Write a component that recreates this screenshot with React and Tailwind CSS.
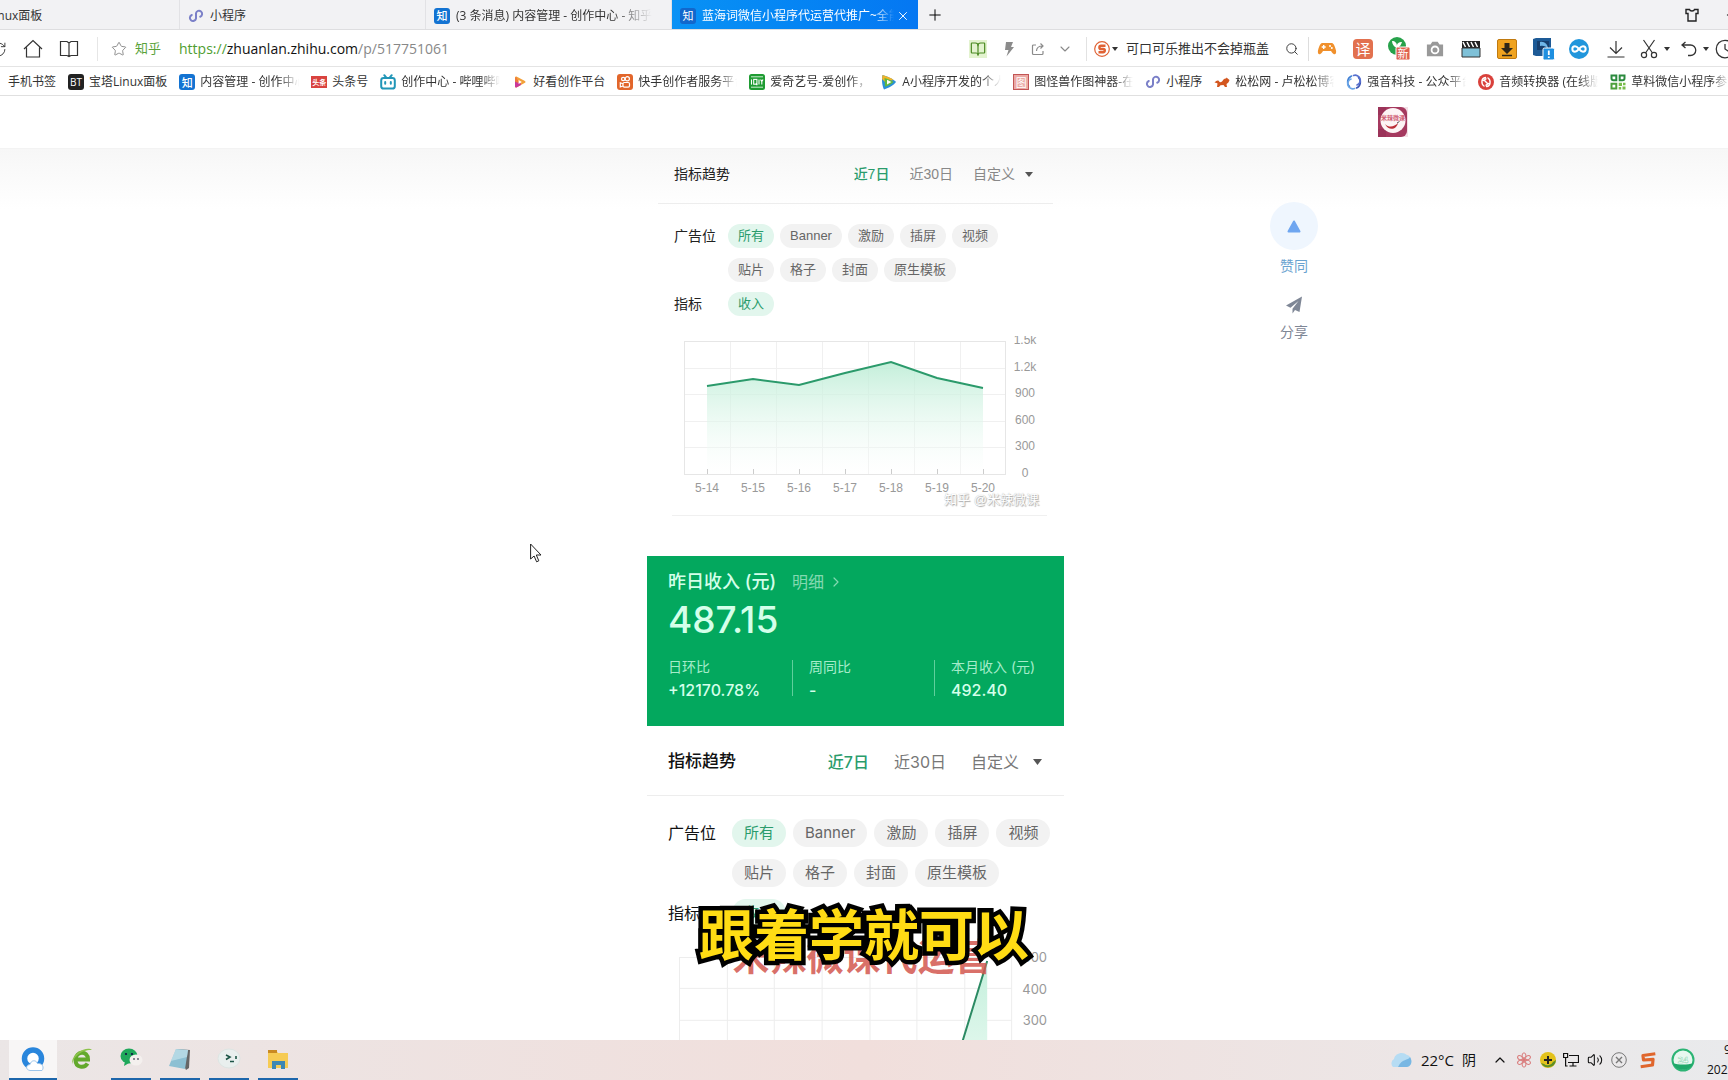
import React from "react";
import {
  BookOpen, Star, ChevronDown, ChevronUp, ChevronRight, Search, Plus, X, Minus,
  Infinity as InfinityIcon, RotateCw, Volume2,
} from "lucide-react";

const UI = "font-['Open_Sans','Noto_Sans_CJK_SC',sans-serif]";
const ARIAL = "font-['Liberation_Sans','Noto_Sans_CJK_SC',sans-serif]";
const INTER = "font-['Inter','Noto_Sans_CJK_SC',sans-serif]";
const FADE = "[mask-image:linear-gradient(to_right,black_80%,transparent)]";

/* ---------- site icons ---------- */

const Mini = ({ color = "#7b80c8" }) => (
  <svg viewBox="0 0 16 16" className="size-4 shrink-0" fill="none" stroke={color} strokeWidth="2" strokeLinecap="round">
    <path d="M3.800 7A3.100 3.100 0 1 0 8 10.500V5.200a3.100 3.100 0 1 1 4.200 3.500" />
  </svg>
);
const Tile = ({ children, className }) => (
  <span className={"flex size-4 shrink-0 items-center justify-center rounded-[3px] leading-none text-white " + className}>{children}</span>
);
const Zhihu = () => <Tile className="bg-[#1373d2] text-[11px] font-medium">知</Tile>;
const Bili = () => (
  <svg viewBox="0 0 16 16" className="size-4 shrink-0" fill="none" stroke="#2196b8" strokeWidth="2" strokeLinecap="round">
    <rect x="1.2" y="4" width="13.6" height="10.6" rx="2.4" />
    <path d="M4.3 1.2l2 2.4M11.7 1.2l-2 2.4M5.2 8v1.8M10.8 8v1.8" />
  </svg>
);
const Haokan = () => (
  <svg viewBox="0 0 16 16" className="size-4 shrink-0" strokeLinejoin="round" strokeWidth="2">
    <path d="M4 3.500v9l8.500-4.600z" fill="#f3a13a" stroke="#f3a13a" />
    <path d="M4 7v5.500l4-2.200z" fill="#c9389b" stroke="#c9389b" />
    <path d="M4 3.500V7l3 1" fill="#ef6a3c" stroke="#ef7c3c" />
    <path d="M6.600 6v4l3.300-2z" fill="#fff" />
  </svg>
);
const Kuaishou = () => (
  <svg viewBox="0 0 16 16" className="size-4 shrink-0">
    <rect width="16" height="16" rx="3" fill="#e2662b" />
    <g fill="none" stroke="#fff" strokeWidth="1.2">
      <circle cx="6.2" cy="5" r="1.7" /><circle cx="10.3" cy="4.8" r="2.1" />
      <rect x="6" y="8.500" width="6.5" height="4.6" rx="1.3" /><path d="M6 9.800L3.300 8.800v4.200L6 12" />
    </g>
  </svg>
);
const Iqiyi = () => (
  <svg viewBox="0 0 16 16" className="size-4 shrink-0">
    <rect width="16" height="16" rx="2.5" fill="#1f9c33" />
    <path d="M2 2.800h12M2 13.200h12" stroke="#cdeed2" />
    <g fill="none" stroke="#fff" strokeWidth="1.1"><path d="M2.500 5.400v5.200" /><rect x="4.700" y="5.400" width="3.200" height="4.800" /><path d="M7 9.400l1.200 1.800M10 5.400v5.200M11.600 5.400l1.200 2.200 1.200-2.200M12.800 7.600v3" /></g>
  </svg>
);
const Tencent = () => (
  <svg viewBox="0 0 16 16" className="size-4 shrink-0">
    <path d="M1.500 1C8 3 13 5.500 15 8c-2 3-7 6-12 7.500C1 12 .500 5 1.500 1z" fill="#2a90d8" />
    <path d="M1.500 1C8 3 11 4.500 12.500 6L4 8 1 5z" fill="#f0b429" />
    <path d="M3.500 4C8 5.500 11 6.800 12.500 8c-2 2-5 3.500-8.500 4.800z" fill="#5fb83f" />
    <path d="M6 5.800L10.400 8 6 10.400z" fill="#fff" />
  </svg>
);
const Squirrel = () => (
  <svg viewBox="0 0 16 16" className="size-4 shrink-0">
    <path d="M.5 9c2-3 4-3 5-1 1.500.5 3-.5 4-2.500C11 4 12.500 5 12.500 3.500L15.500 6c-.5 2-1.500 3-3 4l.5 3h-2l-1.500-2-3 .2L5 13H3l.5-3.500C2.500 8.500 1.500 8.500.5 9z" fill="#d3561f" />
  </svg>
);
const Qiangyin = () => (
  <svg viewBox="0 0 16 16" className="size-4 shrink-0" fill="none" strokeWidth="1.6" strokeLinecap="round">
    <path d="M5.500 2A6.500 6.500 0 0 0 3.500 12.500" stroke="#3f7fd4" /><path d="M5 5A5 5 0 0 0 8.500 14.500" stroke="#6aa5e6" />
    <path d="M10.500 14A6.500 6.500 0 0 0 12.500 3.500" stroke="#3c55b5" /><path d="M11 11A5 5 0 0 0 7.500 1.500" stroke="#5870cf" />
  </svg>
);
const AudioConv = () => (
  <svg viewBox="0 0 16 16" className="size-4 shrink-0">
    <circle cx="8" cy="8" r="8" fill="#d9413b" />
    <g fill="none" stroke="#fff" strokeWidth="1.400" strokeLinecap="round"><path d="M7.500 3.500C3 4 3 10 6 12M8.500 12.500C13 12 13 6 10 4M5.500 6.500L8 4.800M10.500 9.500L8 11.200" /><path d="M6.500 6.500l3 3" /></g>
  </svg>
);
const Caoliao = () => (
  <svg viewBox="0 0 16 16" className="size-4 shrink-0" fill="none" strokeWidth="2">
    <path d="M1.500 1.500h4.800v4.800H3.500a2 2 0 0 1-2-2zM9.700 1.500h4.800v2.800a2 2 0 0 1-2 2H9.700z" stroke="#2b8a3e" />
    <path d="M1.500 9.700h4.800v4.800H1.500z" stroke="#4da03c" /><path d="M8.700 8.700H12V12H8.700zM12.500 12.500h3v3h-3zM13 8.700h2.500v2.500H13zM8.700 13h2.500v2.500H8.700z" fill="#79bd4c" stroke="none" />
  </svg>
);

/* ---------- browser chrome ---------- */

const Caret = ({ className = "h-1 w-1.5 text-[#333]" }) => (
  <svg viewBox="0 0 6 4" preserveAspectRatio="none" className={"shrink-0 " + className}><path d="M0 0h6L3 4z" fill="currentColor" /></svg>
);

function Tab({ icon, title, fade }) {
  return (
    <button type="button" className="flex w-[246px] shrink-0 items-center gap-1.5 border-r border-[#e2e2e5] px-2 pt-0.5 text-[#333]">
      {icon}
      <span className={"max-w-[200px] overflow-hidden whitespace-nowrap " + (fade ? FADE : "")}>{title}</span>
    </button>
  );
}

function TabBar() {
  return (
    <div className="flex h-[30px] shrink-0 overflow-hidden border-b border-[#dedee0] bg-[#f2f2f4] text-xs">
      <nav aria-label="标签页" className="-ml-[66px] flex">
        <Tab icon={<Tile className="bg-[#222] text-[9px]">BT</Tile>} title="宝塔Linux面板" />
        <Tab icon={<Mini />} title="小程序" />
        <Tab icon={<Zhihu />} title="(3 条消息) 内容管理 - 创作中心 - 知乎" fade />
        <div className="flex w-[246px] shrink-0 items-center gap-1.5 bg-gradient-to-r from-[#0a92f5] to-[#0577f2] px-2 pt-0.5 text-white">
          <Tile className="bg-[#1267cc] text-[11px]">知</Tile>
          <button type="button" className="w-[194px] overflow-hidden text-left whitespace-nowrap [mask-image:linear-gradient(to_right,black_90%,transparent)]">蓝海词微信小程序代运营代推广~全能</button>
          <button type="button" aria-label="关闭标签页" className="-ml-1"><X className="size-3.5" strokeWidth={1.6} /></button>
        </div>
      </nav>
      <button type="button" aria-label="新标签页" className="ml-2 flex items-center"><Plus className="size-[18px]" strokeWidth={1.3} /></button>
      <div className="-mr-3 ml-auto flex items-center gap-[25px]">
        <button type="button" aria-label="皮肤">
          <svg viewBox="0 0 14 14" className="size-3.5" fill="none" stroke="#222" strokeWidth="1.400"><path d="M1 1.500h3.500c.5 2 4.500 2 5 0H13v4h-2v7.500H3V5.500H1z" /></svg>
        </button>
        <button type="button" aria-label="最小化"><Minus className="size-4" strokeWidth={1.5} /></button>
      </div>
    </div>
  );
}

const plugins = [
  ["游戏", <svg viewBox="0 0 20 20" className="size-5"><path d="M5.500 4h9c2 0 3 2 4.500 7.500.8 4-1.800 5-4 2l-1-1.500H6l-1 1.500c-2.200 3-4.800 2-4-2C2.500 6 3.500 4 5.500 4z" fill="#f0902c" /><g fill="#fff"><path d="M6 6h1.400v1.300h1.300v1.400H7.400V10H6V8.700H4.700V7.300H6z" /><circle cx="13" cy="7" r="1" /><circle cx="14.800" cy="9" r="1" /></g></svg>],
  ["翻译", <span className="flex size-5 items-center justify-center rounded-sm bg-[#e2714f] text-[15px] leading-none text-white">译</span>],
  ["微信插件", <svg viewBox="0 0 24 24" className="size-6"><circle cx="10" cy="9" r="9" fill="#27a24b" /><path d="M5 4c3 0 5 2 5 5 0-3 2-4 5-4-1 3-2 5-5 6-3-1-5-4-5-7z" fill="#fff" /><rect x="9" y="10" width="14" height="13" rx="1.500" fill="#e0614f" stroke="#fff" /><text x="16" y="20.500" textAnchor="middle" fontSize="11" fill="#fff" fontFamily="Noto Sans CJK SC">新</text></svg>],
  ["截图", <svg viewBox="0 0 20 20" className="size-[18px]"><path d="M1 5h4l2-3h6l2 3h4v13H1z" fill="#999" /><circle cx="10" cy="11" r="3.800" fill="none" stroke="#fff" strokeWidth="2" /></svg>],
  ["视频", <svg viewBox="0 0 20 20" className="size-5"><path d="M1 2h18v7H1z" fill="#222" /><path d="M2 3l2.500 5M6 3l2.500 5M10 3l2.500 5M14 3l2.500 5" stroke="#fff" strokeWidth="1.500" /><path d="M1 9h18v9H1z" fill="#7fc1d8" stroke="#333" /></svg>],
  ["下载器", <svg viewBox="0 0 20 20" className="size-5"><rect x=".5" y=".5" width="19" height="19" rx="1.500" fill="#f0a31f" stroke="#c07a10" /><path d="M7.500 4h5v5H16l-6 6-6-6h3.500z" fill="#2e2718" /><path d="M5 16.500h10" stroke="#2e2718" strokeWidth="1.500" /></svg>],
  ["书签本", <svg viewBox="0 0 24 24" className="size-6"><path d="M2 2l3-1h15v18H5l-3-1z" fill="#1d5a96" /><path d="M6 4h12v9H6z" fill="#173f6e" /><path d="M9 5c4-1 8 2 8 7-2-3-5-4-8-3z" fill="#6fb6e8" /><rect x="12" y="11" width="11.500" height="12" rx="1.500" fill="#1e8fe0" stroke="#fff" /><path d="M17.800 13.500v4.500M17.800 19.500v1.500" stroke="#fff" strokeWidth="1.800" /></svg>],
  ["云服务", <span className="flex size-5 items-center justify-center rounded-full bg-[#2196dc] text-white"><InfinityIcon className="size-4" strokeWidth={3} /></span>],
];

function Toolbar() {
  return (
    <div className="flex h-[37px] shrink-0 items-center overflow-hidden border-b border-[#e4e4e4] bg-white pt-0.5 text-[#333]">
      <button type="button" aria-label="刷新" className="-ml-2.5 mr-4"><RotateCw className="size-[17px]" strokeWidth={1.3} /></button>
      <button type="button" aria-label="主页" className="mr-4">
        <svg viewBox="0 0 20 20" className="size-5" fill="none" stroke="currentColor" strokeWidth="1.200"><path d="M1 10L10 1.500 19 10M3.500 8.500V18h13V8.500" /></svg>
      </button>
      <button type="button" aria-label="书签" className="mr-[18px]">
        <svg viewBox="0 0 20 20" className="size-5" fill="none" stroke="currentColor" strokeWidth="1.200"><path d="M10 4L8 2.500H1.500v14H8l2 1 2-1h6.500v-14H12zM10 4v13" /></svg>
      </button>
      <div className="flex h-6 flex-1 items-center border-l border-[#e6e6e6] pl-[13px]">
        <Star className="size-4 text-[#888]" strokeWidth={1.4} />
        <span className="ml-2 text-[13px] text-[#5aa33a]">知乎</span>
        <a href="https://zhuanlan.zhihu.com/p/517751061" className="ml-[18px] text-sm whitespace-nowrap text-[#888]">
          <span className="text-[#4f9e30]">https://</span><span className="text-[#111]">zhuanlan.zhihu.com</span>/p/517751061
        </a>
      </div>
      <div className="flex w-[766px] shrink-0 items-center">
        <button type="button" aria-label="阅读模式" className="flex w-8 shrink-0 justify-center"><span className="flex size-[18px] items-center justify-center bg-[#e3f3cf] text-[#4b8a22]"><BookOpen className="size-4" strokeWidth={1.8} /></span></button>
        <button type="button" aria-label="加速" className="flex w-[30px] shrink-0 justify-center text-[#8b8b8b]"><svg viewBox="0 0 14 16" className="h-4 w-3.5"><path d="M4 1h7L9 6h3L4.500 15.500 6.500 9H3z" fill="currentColor" /></svg></button>
        <button type="button" aria-label="分享网页" className="flex w-7 shrink-0 justify-center text-[#8b8b8b]"><svg viewBox="0 0 14 14" className="size-3.5" fill="none" stroke="currentColor" strokeWidth="1.200"><path d="M5 3H2.500A1 1 0 0 0 1.500 4v7.500a1 1 0 0 0 1 1h8.500a1 1 0 0 0 1-1V9M5.500 9c0-3.500 2-5 6.500-5M9.500 1.500L12 4 9.500 6.500" /></svg></button>
        <button type="button" aria-label="更多" className="flex w-[26px] shrink-0 justify-center text-[#888]"><ChevronDown className="size-4" strokeWidth={1.6} /></button>
        <form className="ml-2 flex h-6 w-[222px] shrink-0 items-center border-l border-[#e2e2e2] pl-[7px]" onSubmit={(e) => e.preventDefault()}>
          <button type="button" aria-label="搜索引擎" className="flex items-center gap-0.5">
            <svg viewBox="0 0 16 16" className="size-4"><circle cx="8" cy="8" r="7.300" fill="#fff" stroke="#e06234" strokeWidth="1.200" /><path d="M11.500 4.800H7A1.600 1.600 0 0 0 7 8h2.200a1.600 1.600 0 0 1 0 3.200H4.500" fill="none" stroke="#e06234" strokeWidth="2.400" /></svg>
            <Caret />
          </button>
          <input aria-label="搜索" defaultValue="可口可乐推出不会掉瓶盖" className="ml-2 w-[150px] bg-transparent text-[13px] text-[#333] outline-none" />
          <button type="submit" aria-label="搜索按钮" className="flex w-8 justify-center"><Search className="size-3.5" strokeWidth={1.6} /></button>
        </form>
        <div className="flex h-6 shrink-0 items-center border-l border-[#ddd]">
          {plugins.map(([name, icon]) => (
            <button key={name} type="button" aria-label={name} className="flex w-9 justify-center">{icon}</button>
          ))}
        </div>
        <button type="button" aria-label="下载" className="flex w-[38px] shrink-0 justify-center"><svg viewBox="0 0 18 18" className="size-[18px]" fill="none" stroke="currentColor" strokeWidth="1.200"><path d="M9 1v12M3 7.500L9 13.500l6-6M.5 17h17" /></svg></button>
        <button type="button" aria-label="裁剪" className="flex w-10 shrink-0 items-center justify-center gap-1.5">
          <svg viewBox="0 0 18 20" className="h-5 w-[18px] shrink-0" fill="none" stroke="currentColor" strokeWidth="1.200"><path d="M3.500 1L12.500 14M14.500 1L5.500 14" /><circle cx="4" cy="16" r="2.600" /><circle cx="14" cy="16" r="2.600" /></svg><Caret />
        </button>
        <button type="button" aria-label="撤销" className="flex w-10 shrink-0 items-center justify-center gap-1.5">
          <svg viewBox="0 0 16 16" className="size-4 shrink-0" fill="none" stroke="currentColor" strokeWidth="1.300"><path d="M4.500 1L1 4l3.500 3M1 4h8.500a5 5 0 0 1 0 10.500H7" /></svg><Caret />
        </button>
        <svg viewBox="0 0 16 16" className="size-5 shrink-0" fill="none" stroke="currentColor"><circle cx="8" cy="8" r="7" /><path d="M8 4v4l3 2" /></svg>
      </div>
    </div>
  );
}

const bookmarks = [
  { t: "手机书签" },
  { t: "宝塔Linux面板", i: <Tile className="bg-[#222] text-[10px]">BT</Tile> },
  { t: "内容管理 - 创作中心", i: <Zhihu />, f: 1 },
  { t: "头条号", i: <span className="flex h-3 w-4 shrink-0 items-center justify-center bg-[#d9433f] text-[7px] leading-none font-bold text-white">头条</span> },
  { t: "创作中心 - 哔哩哔哩", i: <Bili />, f: 1 },
  { t: "好看创作平台", i: <Haokan /> },
  { t: "快手创作者服务平台", i: <Kuaishou />, f: 1 },
  { t: "爱奇艺号-爱创作，享", i: <Iqiyi />, f: 1 },
  { t: "A小程序开发的个人", i: <Tencent />, f: 1 },
  { t: "图怪兽作图神器-在线", i: <Tile className="rounded-none border border-[#c25555] bg-[#eba9a4] text-[11px] text-[#c25555]">图</Tile>, f: 1 },
  { t: "小程序", i: <Mini /> },
  { t: "松松网 - 卢松松博客", i: <Squirrel />, f: 1 },
  { t: "强音科技 - 公众平台", i: <Qiangyin />, f: 1 },
  { t: "音频转换器 (在线版)", i: <AudioConv />, f: 1 },
  { t: "草料微信小程序参数", i: <Caoliao />, f: 1 },
];

function Bookmarks() {
  return (
    <nav aria-label="书签栏" className="flex h-[29px] shrink-0 items-center gap-3 overflow-hidden border-b border-[#e0e0e0] bg-white pt-0.5 pl-2 text-xs text-[#333]">
      {bookmarks.map((b) => (
        <a key={b.t} href="#bookmark" className="flex shrink-0 items-center gap-[5px]">
          {b.i}
          <span className={b.f ? "w-[99px] overflow-hidden whitespace-nowrap " + FADE : "whitespace-nowrap"}>{b.t}</span>
        </a>
      ))}
    </nav>
  );
}

/* ---------- article ---------- */

const row1 = ["所有", "Banner", "激励", "插屏", "视频"];
const row2 = ["贴片", "格子", "封面", "原生模板"];

function PillRow({ label, items, big }) {
  return (
    <div className="flex">
      <h3 className={big ? "w-16 text-base leading-7 text-[#111]" : "w-[54px] text-sm leading-6 text-[#222]"}>{label}</h3>
      <div className={big ? "flex gap-[7px]" : "flex gap-1.5"}>
        {items.map((p) => {
          const on = p === "所有" || p === "收入";
          return (
            <button
              key={p}
              type="button"
              className={
                "rounded-full whitespace-nowrap " +
                (big ? "h-7 px-3 text-[15px] leading-7 " : "h-6 px-2.5 text-[13px] leading-6 ") +
                (on ? "bg-[#e2f6ed] text-[#2a9c6c]" : "bg-[#f2f2f2] text-[#666]")
              }
            >
              {p}
            </button>
          );
        })}
      </div>
    </div>
  );
}

function SmallChart() {
  const ys = [45, 38, 44, 32, 21, 37, 47];
  const pts = ys.map((y, i) => [23 + i * 46, y]);
  const line = pts.map((p) => p.join(",")).join(" ");
  return (
    <svg viewBox="0 -5 370 160" className={"block w-full " + ARIAL} role="img" aria-label="收入趋势图">
      <defs><linearGradient id="g1" x1="0" y1="0" x2="0" y2="1"><stop offset="0" stopColor="#b9ecd3" /><stop offset="1" stopColor="#ffffff" stopOpacity="0.3" /></linearGradient></defs>
      <g stroke="#f0f0f0">
        {[1, 2, 3, 4, 5, 6].map((n) => <path key={n} d={`M${n * 46}.5 .5v133`} />)}
        {[27, 53, 80, 106].map((y) => <path key={y} d={`M.5 ${y}.5h321`} />)}
      </g>
      <rect x=".5" y=".5" width="321" height="133" fill="none" stroke="#e6e6e6" />
      <path d={`M23 133V45L${line}V133z`} fill="url(#g1)" fillOpacity="0.85" />
      {pts.map(([x]) => <path key={x} d={`M${x}.5 128v5`} stroke="#ccc" />)}
      <polyline points={line} fill="none" stroke="#2b9a6b" strokeWidth="2" />
      <g fontSize="12" fill="#999" textAnchor="middle">
        {["1.5k", "1.2k", "900", "600", "300", "0"].map((t, i) => <text key={t} x="341" y={3 + Math.round(i * 26.6)}>{t}</text>)}
        {["5-14", "5-15", "5-16", "5-17", "5-18", "5-19", "5-20"].map((t, i) => <text key={t} x={23 + i * 46} y="151">{t}</text>)}
      </g>
    </svg>
  );
}

function BigChart() {
  return (
    <svg viewBox="0 -6 386 190" className="block w-full" role="img" aria-label="收入趋势图">
      <defs><linearGradient id="g2" x1="0" y1="0" x2="0" y2="1"><stop offset="0" stopColor="#c4f0dc" /><stop offset="1" stopColor="#f4fcf8" /></linearGradient></defs>
      <g stroke="#ededed" fill="none">
        {[48, 95, 143, 191, 238, 286].map((x) => <path key={x} d={`M${x}.5 0v158`} />)}
        {[31, 63, 94, 126].map((y) => <path key={y} d={`M.5 ${y}.5h333`} />)}
        <rect x=".5" y=".5" width="333" height="158" />
      </g>
      <path d="M262 158L309 4V158z" fill="url(#g2)" />
      <path d="M24 157H262L309 4" fill="none" stroke="#2b8a63" strokeWidth="2" />
      <g fontSize="13" fill="#999" textAnchor="end">
        {["500", "400", "300", "200", "100", "0"].map((t, i) => <text key={t} x="369" y={5 + Math.round(i * 31.5)}>{t}</text>)}
      </g>
    </svg>
  );
}

function TrendOne() {
  return (
    <section className={"mx-[11px] " + ARIAL}>
      <div className="flex h-[55px] items-center border-b border-[#ededed] pr-5 pb-1 pl-4 text-sm text-[#888]">
        <h2 className="mr-auto text-[#222]">指标趋势</h2>
        <button type="button" className="font-medium text-[#2a9c6c]">近7日</button>
        <button type="button" className="ml-5">近30日</button>
        <button type="button" className="ml-5 flex items-center gap-2.5">自定义<Caret className="h-[5px] w-2 text-[#555]" /></button>
      </div>
      <div className="flex flex-col gap-2.5 pt-5 pl-4">
        <PillRow label="广告位" items={row1} />
        <PillRow items={row2} />
        <PillRow label="指标" items={["收入"]} />
      </div>
      <div className="mt-5 ml-[26px] w-[370px]"><SmallChart /></div>
      <div className="mr-1.5 ml-3.5 flex h-5 items-start justify-end border-b border-[#f0f0f0] pr-2">
        <span className="-mt-1.5 text-[13px] leading-5 text-white [text-shadow:1px_1px_1px_#aaa,0_0_1px_#aaa]">知乎 @米辣微课</span>
      </div>
    </section>
  );
}

const stats = [["日环比", "+12170.78%"], ["周同比", "-"], ["本月收入 (元)", "492.40"]];

function TrendTwo() {
  return (
    <section className={"mt-10 " + INTER}>
      <div className="h-[170px] bg-[#03a85e] pt-3 text-[#d4ffea]">
        <div className="flex h-7 items-center px-[21px]">
          <h2 className="text-lg font-medium">昨日收入 (元)</h2>
          <a href="#detail" className="ml-4 flex items-center gap-1 text-base text-[#83d9b1]">明细<ChevronRight className="size-4" strokeWidth={1.8} /></a>
        </div>
        <p className="mt-1 h-10 px-[21px] text-[37px] leading-10 font-medium">487.15</p>
        <dl className="mt-4 flex">
          {stats.map(([k, v], i) => (
            <div key={k} className={i === 0 ? "w-[145px] shrink-0 pl-[21px]" : i === 1 ? "w-[142px] shrink-0 relative pl-[17px] before:absolute before:top-1 before:left-0 before:h-9 before:w-px before:bg-[#5fcf9c]" : "relative pl-[17px] before:absolute before:top-1 before:left-0 before:h-9 before:w-px before:bg-[#5fcf9c]"}>
              <dt className="text-sm leading-[22px] whitespace-nowrap text-[#a5ecca]">{k}</dt>
              <dd className="text-base leading-6 font-medium">{v}</dd>
            </div>
          ))}
        </dl>
      </div>
      <div className="flex h-[70px] items-center border-b border-[#ededed] pt-0.5 pr-[22px] pl-[21px] text-base text-[#777]">
        <h2 className="mr-auto text-[17px] font-medium text-[#111]">指标趋势</h2>
        <button type="button" className="font-medium text-[#2a9c6c]">近7日</button>
        <button type="button" className="ml-[25px]">近30日</button>
        <button type="button" className="ml-[25px] flex items-center gap-3.5">自定义<Caret className="h-1.5 w-[9px] text-[#555]" /></button>
      </div>
      <div className="flex flex-col gap-3 pt-[23px] pl-[21px]">
        <PillRow label="广告位" items={row1} big />
        <PillRow items={row2} big />
        <PillRow label="指标" items={["收入"]} big />
      </div>
      <div className="mt-6 ml-8"><BigChart /></div>
    </section>
  );
}

/* ---------- taskbar ---------- */

const apps = [
  ["浏览器", <svg viewBox="0 0 24 24" className="size-6"><circle cx="12" cy="11.500" r="8.500" fill="#fff" stroke="#2a86dc" strokeWidth="5.500" /><path d="M9 23.500c-5-1-4-5.500 0-6 1-4.500 6-5 7.500-1 5-.5 7 4 4.500 7z" fill="#fff" stroke="#9cc4ea" /></svg>],
  ["360", <svg viewBox="0 0 24 24" className="size-6"><g fill="none" stroke="#63a92c" strokeWidth="4"><path d="M6 12.500h12C18 3 5.500 4 5.500 13c0 8 9 8.500 12 3.500" /></g><path d="M2 19C2 9 14 2 22 3c-4-4-19 2-20 12z" fill="#8cc34a" /></svg>],
  ["微信", <svg viewBox="0 0 24 24" className="size-6"><ellipse cx="10" cy="9" rx="8.500" ry="7.500" fill="#1fa85b" /><path d="M6 14l-1 5 5-3z" fill="#1fa85b" /><circle cx="7" cy="7" r="1.100" fill="#114" /><circle cx="13" cy="7" r="1.100" fill="#114" /><ellipse cx="17" cy="13" rx="6.500" ry="5.500" fill="#f4f0ee" /><circle cx="15" cy="12" r=".9" fill="#556" /><circle cx="19" cy="12" r=".9" fill="#556" /></svg>],
  ["记事本", <svg viewBox="0 0 24 24" className="size-6"><path d="M8 2l14 1-1 18-3 2z" fill="#666" /><path d="M8 2l12 1-3 19L1 19z" fill="#8dc0d3" /><path d="M8 2l12 1-1 7L3 14z" fill="#c3e2eb" opacity=".7" /></svg>],
  ["终端", <svg viewBox="0 0 24 24" className="size-6"><ellipse cx="12" cy="11.500" rx="11" ry="9.500" fill="#e9efee" stroke="#dde5e3" /><path d="M9 8l4 2-4 2.500M13 14.500h4M19 9v3" fill="none" stroke="#1d5547" strokeWidth="1.600" /></svg>],
  ["文件资源管理器", <svg viewBox="0 0 24 24" className="size-6"><path d="M2 3h8l2 3h10v15H2z" fill="#f6cb54" /><path d="M2 3h9v3H2z" fill="#c98a22" /><path d="M6 22v-8h13v8h-4v-4h-5v4z" fill="#3d87b3" /></svg>],
];

function Taskbar() {
  return (
    <footer className="flex h-10 shrink-0 items-center overflow-hidden bg-gradient-to-r from-[#ebe6e6] via-[#f1dfdc] to-[#e9eaec] text-[#111]">
      <div className="ml-[9px] flex gap-[9px]">
        {apps.map(([name, icon], i) => (
          <button
            key={name}
            type="button"
            aria-label={name}
            className={
              "flex h-10 items-center justify-center border-b-2 " +
              (i === 0 ? "w-12 bg-[#f8f6f6] border-[#1d66ab]" : i === 1 ? "w-10 -ml-1 border-transparent" : "w-10 border-[#1d66ab]")
            }
          >
            {icon}
          </button>
        ))}
      </div>
      <div className="-mr-[11px] ml-auto flex items-center">
        <button type="button" className="mr-4 flex items-center gap-2 text-[15px]">
          <svg viewBox="0 0 24 20" className="h-5 w-6"><path d="M4 17a5 5 0 0 1 1-8c1-6 9-8 13-4 5 1 6 10 1 12z" fill="#b6dcf3" /><path d="M9 17c4-9 10-6 12-10 3 5 1 9-3 10z" fill="#78b7e3" /></svg>
          <span>22°C</span><span className="text-sm">阴</span>
        </button>
        <div className="flex w-[135px] items-center justify-between">
          <ChevronUp className="size-4" strokeWidth={1.8} />
          <svg viewBox="0 0 16 16" className="size-4" fill="none" stroke="#d97b7b">{[0, 60, 120, 180, 240, 300].map((a) => <ellipse key={a} cx="8" cy="4.200" rx="2" ry="3.400" transform={`rotate(${a} 8 8)`} />)}</svg>
          <svg viewBox="0 0 16 16" className="size-4"><circle cx="8" cy="8" r="8" fill="#e3c21c" /><path d="M1 11a8 8 0 0 0 15-3l-3 2a6 6 0 0 1-9 2z" fill="#5d8f27" /><path d="M8 4v8M4 8h8" stroke="#222" strokeWidth="2" /></svg>
          <svg viewBox="0 0 16 16" className="size-4" fill="none" stroke="#111" strokeWidth="1.200"><path d="M6 3.500h9.500v7H5M10 10.500v3M6.500 14h7M.6 1.500h4v4h-4zM2.600 5.500V14h2" /></svg>
          <Volume2 className="size-4" strokeWidth={1.6} />
          <svg viewBox="0 0 16 16" className="size-4" fill="none" stroke="#777"><circle cx="8" cy="8" r="7.300" /><path d="M5 5l6 6M11 5l-6 6" strokeWidth="1.400" /></svg>
        </div>
        <svg viewBox="0 0 16 16" className="ml-3 size-[18px]" fill="none" stroke="#e0662c" strokeWidth="2.800" strokeLinejoin="round"><path d="M14.500 2.500L3.500 4l.5 4 8.500-.5-.5 5L1.500 14" /></svg>
        <svg viewBox="0 0 24 24" className="ml-3.5 size-6"><circle cx="12" cy="12" r="10.500" fill="#e8f7ef" stroke="#2cb474" strokeWidth="2" /><path d="M2 15c5 2 15 2 20 0-2 9-18 9-20 0z" fill="#1fa869" /><text x="12" y="15" textAnchor="middle" fontSize="9" fontWeight="700" fill="#fff" stroke="#8fd6b3" strokeWidth=".5">24</text></svg>
        <div className="ml-3 w-8 text-xs leading-5 whitespace-nowrap"><p className="pl-[17px]">9:41</p><p>2022/5/21</p></div>
      </div>
    </footer>
  );
}

export default function App() {
  return (
    <div className={"relative flex h-screen flex-col overflow-hidden bg-white " + UI}>
      <TabBar />
      <Toolbar />
      <Bookmarks />
      <header className="flex h-[53px] shrink-0 items-center justify-center border-b border-[#f3f3f3] bg-white pr-4">
        <div className="flex w-[1104px] justify-end">
          <button type="button" aria-label="用户头像">
            <svg viewBox="0 0 30 30" className="size-[30px]">
              <path d="M0 0h30v30H0z" fill="#f3dfe6" /><rect width="29" height="30" rx="6" fill="#a5395f" /><path d="M0 0h8v8H0zM0 22h8v8H0z" fill="#9b3359" />
              <circle cx="15" cy="13.500" r="12.500" fill="#fdf4f5" />
              <text x="15" y="13" textAnchor="middle" fontSize="6" fontWeight="700" fill="#cf5a72" fontFamily="Noto Sans CJK SC">米辣微课</text>
              <path d="M7 17c4 4 9 3 13-1-1 6-9 9-13 1z" fill="#bb3038" /><path d="M19 16l2.500-1.500" stroke="#555" />
            </svg>
          </button>
        </div>
      </header>
      <main className="grid min-h-0 flex-1 grid-cols-[1fr_417px_1fr] overflow-hidden bg-gradient-to-b from-[#f7f7f7] to-white to-[60px] pr-[17px]">
        <div />
        <article className="min-w-0">
          <TrendOne />
          <TrendTwo />
        </article>
        <aside className="ml-[206px] flex w-12 flex-col items-center pt-[53px] text-sm">
          <button type="button" className="flex flex-col items-center gap-1.5 text-[#6aa3cf]">
            <span className="flex size-12 items-center justify-center rounded-full bg-[#eff6fe]">
              <svg viewBox="0 0 14 13" className="h-[13px] w-3.5"><path d="M7 1.500L12.500 11.500H1.500z" fill="#6fa6f0" stroke="#6fa6f0" strokeWidth="2" strokeLinejoin="round" /></svg>
            </span>
            赞同
          </button>
          <button type="button" className="mt-5 flex flex-col items-center gap-2 text-[#7f8796]">
            <svg viewBox="0 0 16 18" className="h-[18px] w-4"><path d="M16 .5L0 9.500l4.500 2.300L12.500 5 6.500 12.800V17.500L9 14l4.500 2z" fill="#7f8796" /></svg>
            分享
          </button>
        </aside>
      </main>
      <Taskbar />

      <svg viewBox="0 0 12 20" className="absolute top-[543px] left-[530px] h-5 w-3"><path d="M.6 1v15l3.500-3 2.500 5.800 2.200-1L6.300 12H11z" fill="#fff" stroke="#222" /></svg>
      <div className="pointer-events-none absolute inset-x-0 top-[928px] pr-1 text-center font-['Noto_Sans_CJK_SC',sans-serif] text-[37px] leading-[54px] font-bold text-[#d3564e]/85">米辣微课代运营</div>
      <div className="pointer-events-none absolute inset-x-0 top-[891px] text-center font-['Noto_Sans_CJK_SC',sans-serif] text-[55px] leading-20 font-bold text-[#ffdc14] [-webkit-text-stroke:9px_black] [paint-order:stroke_fill] [stroke-linejoin:round]">跟着学就可以</div>
    </div>
  );
}
